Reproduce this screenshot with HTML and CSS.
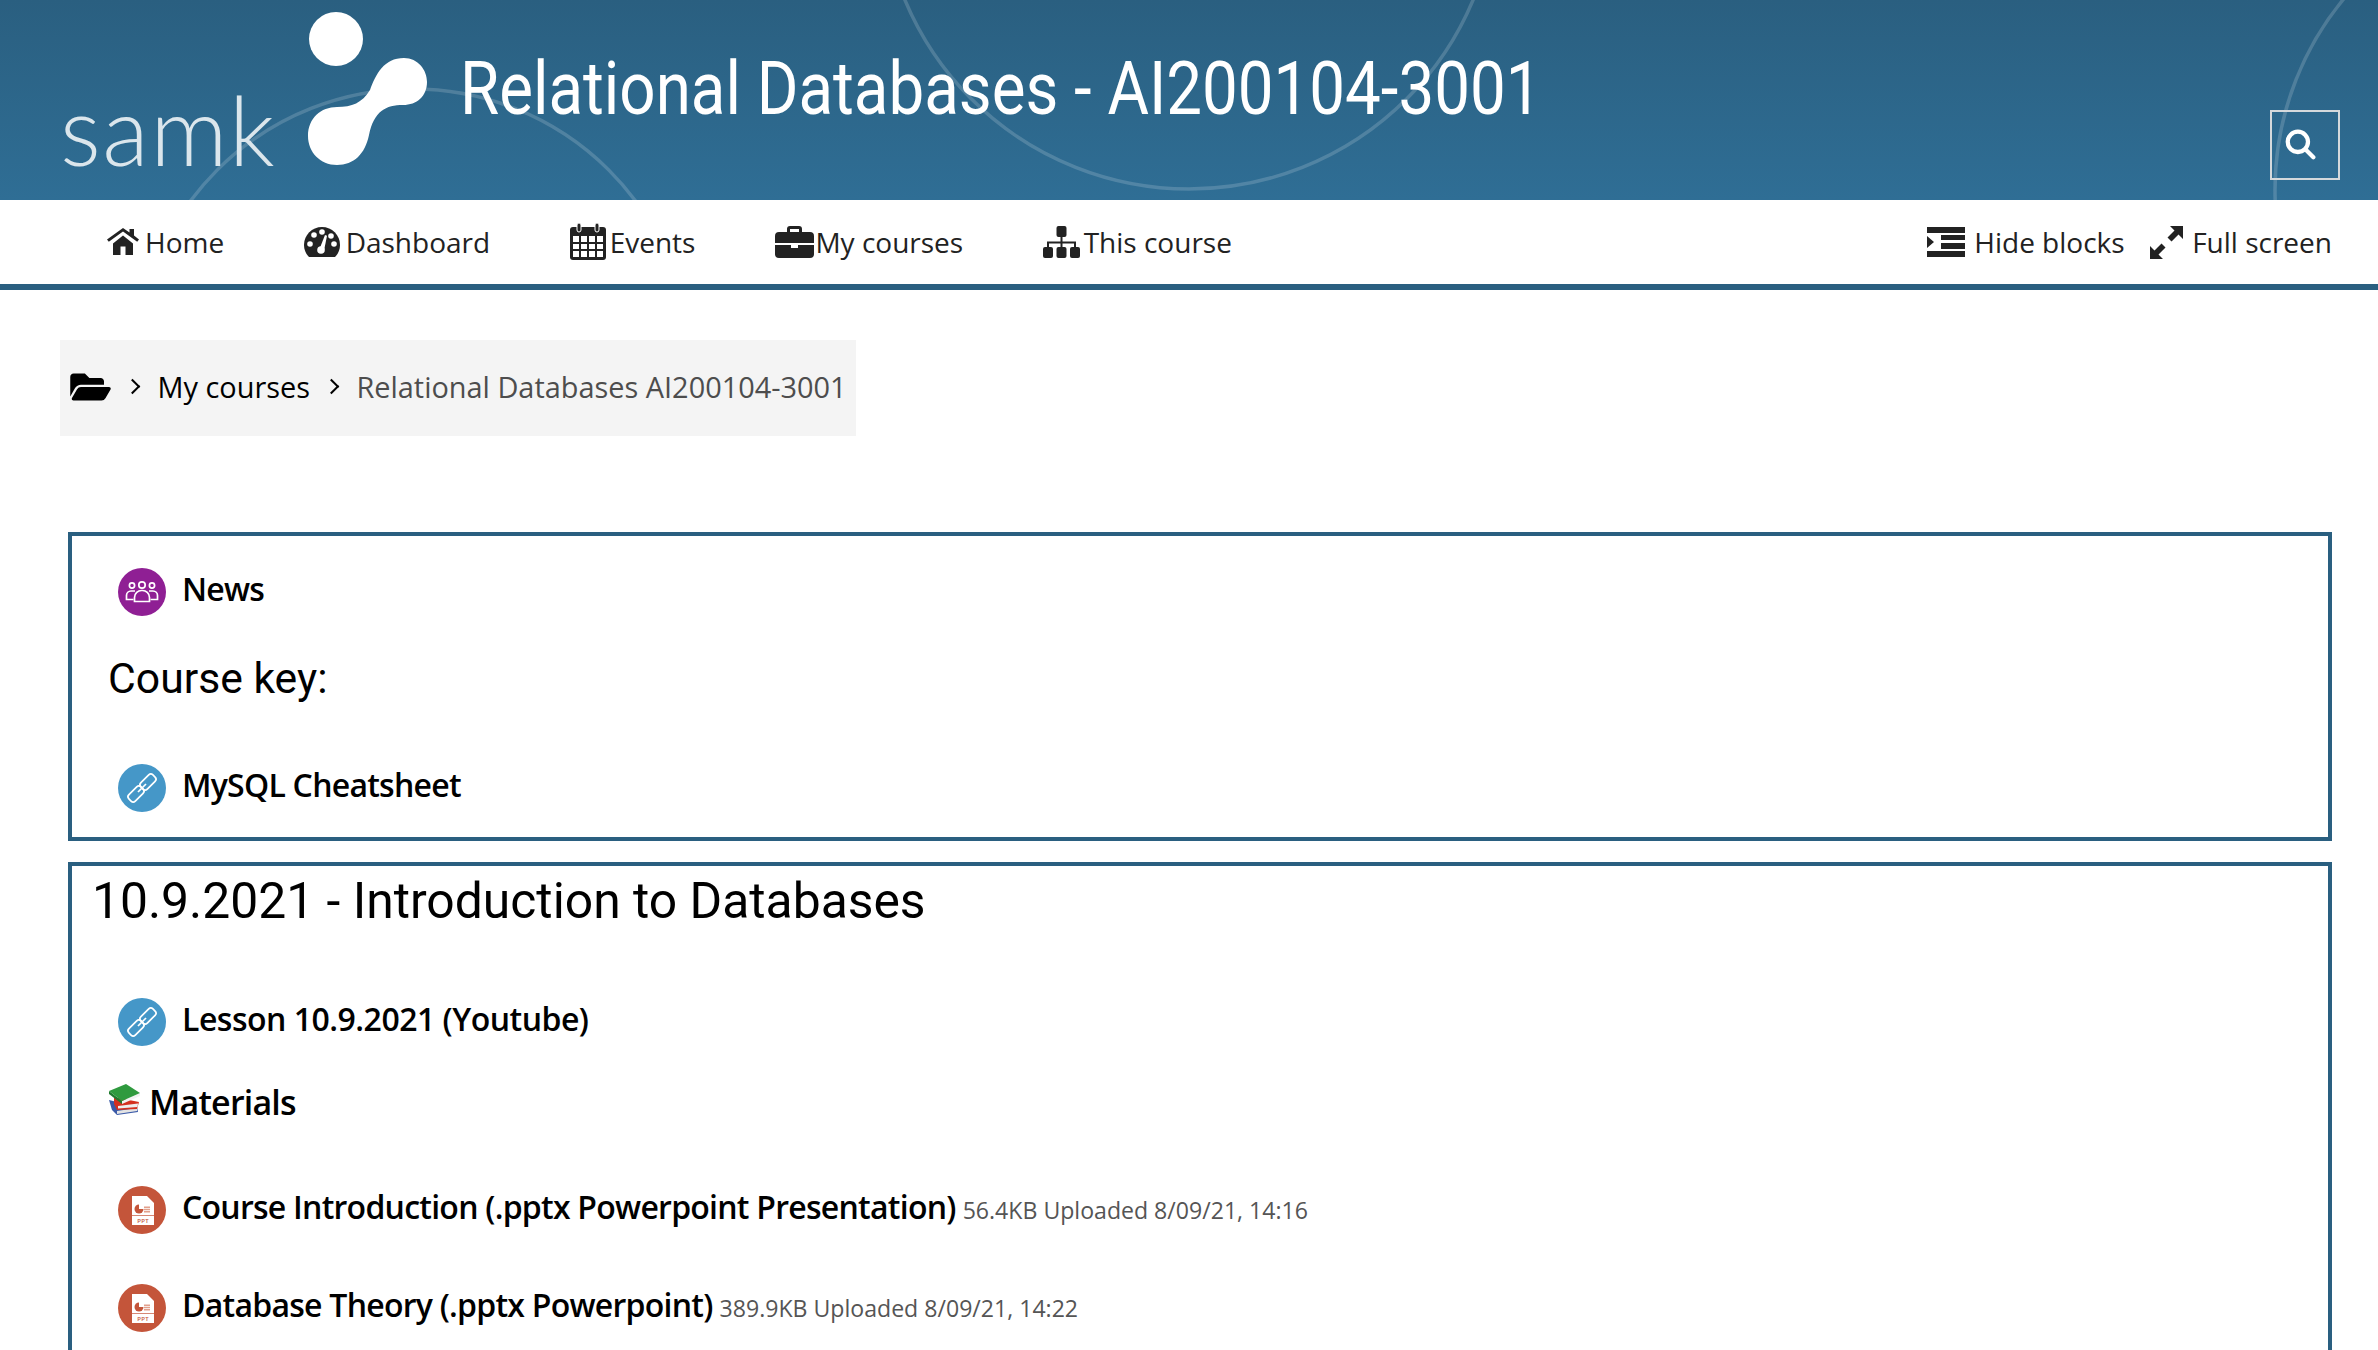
FILE: index.html
```html
<!DOCTYPE html>
<html lang="en">
<head>
    <meta charset="UTF-8">
    <meta name="viewport" content="width=device-width, initial-scale=1.0">
    <title>Relational Databases - AI200104-3001</title>
    <link rel="stylesheet" href="styles.css">
</head>
<body>
    <svg class="sprite" xmlns="http://www.w3.org/2000/svg">
        <symbol id="icon-link" viewBox="0 0 48 48">
            <g fill="none" stroke="#fff" stroke-width="1.7">
                <rect x="21.500" y="13.500" width="17" height="9" rx="3" transform="rotate(-45 30 18)" />
                <rect x="9.500" y="25.500" width="17" height="9" rx="3" transform="rotate(-45 18 30)" />
                <path d="M20 28l8-8" />
            </g>
        </symbol>
        <symbol id="icon-ppt" viewBox="0 0 48 48">
            <path fill="#fff" d="M14 10h15l7 7v22H14z" />
            <circle cx="21" cy="23" r="4.500" fill="#c4553a" />
            <path fill="#fff" d="M21 23v-5h5.500v5z" />
            <path fill="#e2a08c" d="M26 20.500h6v1.400h-6zM26 22.800h6v1.400h-6zM26 25.100h6v1.400h-6z" />
            <path stroke="#c4553a" stroke-width="0.7" d="M14 29.500h22" />
            <text class="ppt-label" x="25" y="36.500">PPT</text>
        </symbol>
    </svg>

    <div class="page">
        <header class="top-bar">
            <svg class="arcs" width="2378" height="200" viewBox="0 0 2378 200">
                <circle cx="413" cy="366" r="277" />
                <circle cx="1189" cy="-119" r="308" />
                <circle cx="2575" cy="190" r="300" />
            </svg>
            <div class="logo">
                <span class="logo-text">samk</span>
                <svg class="logo-mark" width="130" height="170" viewBox="0 0 130 170">
                    <circle cx="36" cy="39" r="27" />
                    <path d="M8 136C8 118 21 107 37 107C52 107 62 103 70 90C76 74 84 58 104 58C118 58 127 70 127 82C127 96 117 105 103 105C86 105 74 111 69 135C65 154 54 165 37 165C20 165 8 152 8 136Z" />
                </svg>
            </div>
            <h1 class="course-title"><span>Relational Databases - AI200104-3001</span></h1>
            <button class="search-btn" aria-label="Search">
                <svg width="32" height="32" viewBox="0 0 30 30" fill="none" stroke="#fff" stroke-width="4">
                    <circle cx="13" cy="13" r="9.500" />
                    <path d="M20 20l7.500 7.500" stroke-linecap="round" />
                </svg>
            </button>
        </header>

        <nav class="main-nav">
            <a class="nav-link" href="#">
                <svg width="32" height="28" viewBox="0 0 32 28" fill="#222">
                    <path d="M6 15.500L16 7.500l10 8V27h-7.500v-8.500h-5V27H6z" />
                    <path d="M22.500 1H27v6.500l5 4-1.800 2.300L16 3.500 1.800 13.800 0 11.500 16 0l6.500 4.500z" />
                </svg>
                Home
            </a>
            <a class="nav-link" href="#">
                <svg width="36" height="30" viewBox="0 0 36 30">
                    <path fill="#222" d="M5 30C2 27 0 23 0 18 0 8 8 0 18 0s18 8 18 18c0 5-2 9-5 12z" />
                    <g fill="#fff">
                        <circle cx="6" cy="17" r="2.800" />
                        <circle cx="10" cy="8" r="2.800" />
                        <circle cx="18" cy="5" r="2.800" />
                        <circle cx="30" cy="17" r="2.800" />
                        <circle cx="27" cy="9" r="2.800" />
                        <circle cx="17" cy="23" r="3.800" />
                        <path d="M15.500 22L21 8l2 .7-3 15z" />
                    </g>
                </svg>
                Dashboard
            </a>
            <a class="nav-link nav-link-events" href="#">
                <svg width="36" height="38" viewBox="0 0 36 38">
                    <rect y="4" width="36" height="33" rx="3" fill="#222" />
                    <rect x="3" y="13" width="30" height="21" fill="#fff" />
                    <path stroke="#222" stroke-width="2" d="M10 13v21M18 13v21M26 13v21M3 20h30M3 27h30" />
                    <rect x="7" y="0" width="4" height="9" rx="2" fill="#222" stroke="#fff" />
                    <rect x="25" y="0" width="4" height="9" rx="2" fill="#222" stroke="#fff" />
                </svg>
                Events
            </a>
            <a class="nav-link nav-link-tight" href="#">
                <svg width="39" height="32" viewBox="0 0 39 32" fill="#222">
                    <path d="M12 6V3a3 3 0 0 1 3-3h9a3 3 0 0 1 3 3v3h8a4 4 0 0 1 4 4v7H0v-7a4 4 0 0 1 4-4zm3 0h9V3h-9z" />
                    <path d="M0 19h16v3h7v-3h16v9a4 4 0 0 1-4 4H4a4 4 0 0 1-4-4z" />
                </svg>
                My courses
            </a>
            <a class="nav-link nav-link-events" href="#">
                <svg width="37" height="32" viewBox="0 0 37 32">
                    <g fill="#222">
                        <rect x="13.500" width="10" height="11" rx="2" />
                        <rect y="21" width="10" height="11" rx="2" />
                        <rect x="13.500" y="21" width="10" height="11" rx="2" />
                        <rect x="27" y="21" width="10" height="11" rx="2" />
                    </g>
                    <path fill="none" stroke="#222" stroke-width="2" d="M18.500 11v10M5 21v-4.500h27V21" />
                </svg>
                This course
            </a>
            <div class="nav-right">
                <a class="nav-link nav-link-wide" href="#">
                    <svg width="38" height="30" viewBox="0 0 38 30" fill="#222">
                        <path d="M0 0h38v6H0zM14 8h24v5H14zM14 16h24v6H14zM0 24h38v6H0zM0 9l7 6-7 6z" />
                    </svg>
                    Hide blocks
                </a>
                <a class="nav-link nav-link-wide" href="#">
                    <svg width="33" height="33" viewBox="0 0 33 33" fill="#222">
                        <path d="M33 0v13l-4.500-4.500-7 7-4-4 7-7L20 0zM0 33V20l4.500 4.500 7-7 4 4-7 7L13 33z" />
                    </svg>
                    Full screen
                </a>
            </div>
        </nav>

        <ol class="breadcrumb">
            <li>
                <svg class="folder" width="41" height="36" viewBox="0 0 576 512" fill="#000">
                    <path d="M572.694 292.093L500.27 416.248A63.997 63.997 0 0 1 444.989 448H45.025c-18.523 0-30.064-20.093-20.731-36.093l72.424-124.155A64 64 0 0 1 152 256h399.964c18.523 0 30.064 20.093 20.73 36.093zM152 224h328v-48c0-26.51-21.49-48-48-48H272l-64-64H48C21.49 64 0 85.49 0 112v278.046l69.077-118.418C86.214 242.25 117.989 224 152 224z" />
                </svg>
            </li>
            <li class="crumb-sep"></li>
            <li><a href="#">My courses</a></li>
            <li class="crumb-sep"></li>
            <li class="crumb-current">Relational Databases AI200104-3001</li>
        </ol>

        <section class="course-box box-news">
            <div class="activity">
                <span class="activity-icon icon-forum">
                    <svg width="48" height="48" viewBox="0 0 48 48" fill="none" stroke="#fff" stroke-width="1.700">
                        <circle cx="24" cy="17" r="3.200" />
                        <circle cx="14" cy="17.500" r="2.600" />
                        <circle cx="34" cy="17.500" r="2.600" />
                        <path d="M16.500 33.500v-4a7 7 0 0 1 7.500-7 7 7 0 0 1 7.500 7v4z" />
                        <path d="M17 23h-4a4.500 4.500 0 0 0-4.500 4.500v4h7M31 23h4a4.500 4.500 0 0 1 4.500 4.500v4h-7" />
                    </svg>
                </span>
                <a href="#">News</a>
            </div>
            <p class="course-key">Course key:</p>
            <div class="activity">
                <span class="activity-icon icon-url"><svg width="48" height="48"><use href="#icon-link" /></svg></span>
                <a href="#">MySQL Cheatsheet</a>
            </div>
        </section>

        <section class="course-box box-week">
            <h2 class="week-title">10.9.2021 - Introduction to Databases</h2>
            <div class="activity lesson">
                <span class="activity-icon icon-url"><svg width="48" height="48"><use href="#icon-link" /></svg></span>
                <a href="#">Lesson 10.9.2021 (Youtube)</a>
            </div>
            <h3 class="materials">
                <svg width="31" height="31" viewBox="0 0 31 31">
                    <path fill="#3a5aa8" d="M0 16l28 7 1 5-21 3-5-5z" />
                    <path fill="#e4e4e4" d="M8 27l20-3v3L8 30z" />
                    <path fill="#d4301f" d="M5 13l25 5-2 7-20 1-3-6z" />
                    <path fill="#eee" d="M9 22l20-2.500-.5 3.500L9 24.500z" />
                    <path fill="#1f7a2e" d="M0 7l13 10v3L0 10z" />
                    <path fill="#f2f2f2" d="M13 17l18-8v3l-18 8z" />
                    <path fill="#2f9a3e" d="M17 0l14 9-18 8L0 7z" />
                </svg>
                Materials
            </h3>
            <div class="activity file-first">
                <span class="activity-icon icon-ppt"><svg width="48" height="48"><use href="#icon-ppt" /></svg></span>
                <a href="#">Course Introduction (.pptx Powerpoint Presentation)</a>
                <span class="file-meta">56.4KB Uploaded 8/09/21, 14:16</span>
            </div>
            <div class="activity file-next">
                <span class="activity-icon icon-ppt"><svg width="48" height="48"><use href="#icon-ppt" /></svg></span>
                <a href="#">Database Theory (.pptx Powerpoint)</a>
                <span class="file-meta">389.9KB Uploaded 8/09/21, 14:22</span>
            </div>
        </section>
    </div>
</body>
</html>
```
FILE: styles.css
```css
body {
    margin: 0;
    font-family: "Open Sans", sans-serif;
    color: #000;
    background-color: #fff;
}

a {
    color: inherit;
    text-decoration: none;
}

.sprite {
    display: none;
}

.page {
    height: 1350px;
    overflow: hidden;
}

/* header */
.top-bar {
    position: relative;
    display: flex;
    align-items: flex-start;
    height: 200px;
    background: linear-gradient(#2a5f80, #2f6e95);
    overflow: hidden;
}

.arcs {
    position: absolute;
    top: 0;
    left: 0;
}

.arcs circle {
    fill: none;
    stroke: rgba(255, 255, 255, 0.17);
    stroke-width: 3.5;
}

.logo {
    position: relative;
    display: flex;
    align-items: flex-end;
    width: 400px;
    height: 174px;
    margin-left: 60px;
    flex-shrink: 0;
}

.logo-text {
    width: 240px;
    font-family: "Lato", sans-serif;
    font-weight: 300;
    font-size: 96px;
    line-height: 90px;
    letter-spacing: 1.500px;
    color: #dbe6ec;
}

.logo-mark {
    align-self: flex-start;
    fill: #fff;
}

.course-title {
    position: relative;
    margin: 44px 0 0;
    font-family: "Roboto", sans-serif;
    font-weight: 400;
    font-size: 74px;
    line-height: 90px;
    color: #fff;
    white-space: nowrap;
}

.course-title span {
    display: inline-block;
    transform: scaleX(0.86);
    transform-origin: left center;
}

.search-btn {
    position: absolute;
    top: 110px;
    right: 38px;
    width: 70px;
    height: 70px;
    padding: 0 10px 0 0;
    border: 2px solid #d5d9dc;
    background: none;
}

/* nav */
.main-nav {
    display: flex;
    align-items: center;
    gap: 79.500px;
    height: 84px;
    padding: 0 46px 0 107px;
    border-bottom: 6px solid #2a5f80;
    font-size: 28px;
    color: #222;
}

.nav-link {
    display: flex;
    align-items: center;
    gap: 6px;
    white-space: nowrap;
}

.nav-link-events {
    gap: 4px;
}

.nav-link-tight {
    gap: 1.500px;
}

.nav-right {
    display: flex;
    gap: 25.500px;
    margin-left: auto;
}

.nav-link-wide {
    gap: 9px;
}

/* breadcrumb */
.breadcrumb {
    display: flex;
    align-items: center;
    width: 796px;
    height: 96px;
    box-sizing: border-box;
    margin: 50px 0 0 60px;
    padding: 0 0 3px 10px;
    list-style: none;
    background-color: #f4f4f4;
    font-size: 28.900px;
}

.breadcrumb li {
    display: flex;
    align-items: center;
}

.crumb-sep {
    width: 11px;
    height: 11px;
    margin: 0 19.500px 0 16px;
    border-top: 2px solid #000;
    border-right: 2px solid #000;
    box-sizing: border-box;
    transform: rotate(45deg);
}

.crumb-current {
    color: #4d4d4d;
    white-space: nowrap;
}

/* course sections */
.course-box {
    margin: 0 46px 0 68px;
    border: 4px solid #2a5f80;
}

.box-news {
    height: 309px;
    box-sizing: border-box;
    margin-top: 96px;
    padding: 32px 0 0 37px;
}

.box-week {
    margin-top: 21px;
    padding-left: 37px;
    height: 600px;
}

.activity {
    display: flex;
    align-items: center;
    gap: 16px;
    height: 48px;
    margin-left: 9px;
    font-size: 32px;
    font-weight: 600;
    letter-spacing: -0.750px;
    white-space: nowrap;
}

.activity a {
    padding-bottom: 7px;
}

.activity-icon {
    display: block;
    width: 48px;
    height: 48px;
    border-radius: 50%;
    flex-shrink: 0;
}

.activity-icon svg {
    display: block;
}

.icon-forum {
    background-color: #8f1f94;
}

.icon-url {
    background-color: #4597c8;
}

.icon-ppt {
    background-color: #c4553a;
}

.ppt-label {
    font-family: "Open Sans", sans-serif;
    font-size: 6px;
    font-weight: 600;
    letter-spacing: 0.300px;
    fill: #c4553a;
    text-anchor: middle;
}

.course-key {
    margin: 27px 0 51px -1px;
    font-family: "Roboto", sans-serif;
    font-size: 42.700px;
    line-height: 70px;
}

.week-title {
    margin: 0 0 0 -17px;
    padding-top: 2px;
    font-family: "Roboto", sans-serif;
    font-weight: 400;
    font-size: 49.800px;
    line-height: 66px;
}

.lesson {
    margin-top: 64px;
    letter-spacing: -0.500px;
}

.materials {
    display: flex;
    align-items: center;
    gap: 9px;
    height: 40px;
    margin: 36px 0 0;
    font-size: 34px;
    font-weight: 600;
    letter-spacing: -0.800px;
}

.materials svg {
    margin-top: -6px;
}

.file-first {
    margin-top: 64px;
}

.file-next {
    margin-top: 50px;
}

.file-meta {
    margin-left: -9px;
    font-size: 23.100px;
    font-weight: 400;
    letter-spacing: 0;
    color: #555;
}
```
